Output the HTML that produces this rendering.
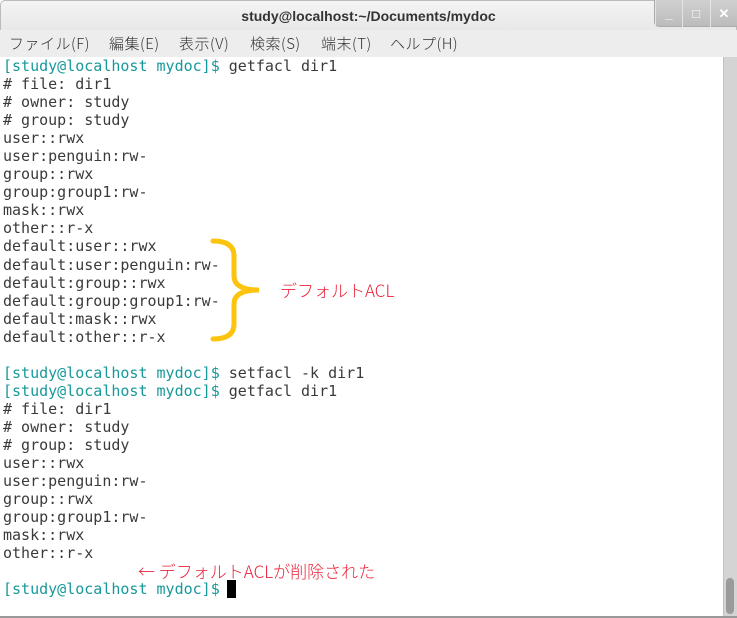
<!DOCTYPE html>
<html><head><meta charset="utf-8"><style>
*{margin:0;padding:0;box-sizing:border-box}
body{width:737px;height:618px;overflow:hidden;background:#fff;position:relative;font-family:"Liberation Sans","Noto Sans CJK JP",sans-serif}
#title{position:absolute;left:0;top:0;width:737px;height:30px;background:linear-gradient(#f4f4f4,#e8e8e8);border:1px solid #bbb;border-bottom:none;border-radius:5px 5px 0 0}
#title .t{position:absolute;left:0;right:0;top:7px;text-align:center;font-size:14px;font-weight:bold;color:#333}
#btns{position:absolute;left:654px;top:0;width:83px;height:27px;background:linear-gradient(#d0d0d0,#bcbcbc);border-left:1px solid #aaa;border-bottom:1px solid #aaa;border-radius:0 0 0 5px}
#btns div{position:absolute;top:0;width:27px;height:27px;border-left:1px solid #e4e4e4;color:#fff;font-size:13px;font-weight:bold;text-align:center;line-height:27px}
#menu{position:absolute;left:0;top:30px;width:737px;height:27px;background:#ededed;font-size:15px;color:#333;font-family:"Noto Sans CJK JP",sans-serif;font-weight:300}
#menu span{position:absolute;top:3px;white-space:nowrap;letter-spacing:0.5px}
#term{position:absolute;left:0;top:57px;width:723px;height:561px;background:#fff}
pre{position:absolute;left:3px;top:0;font-family:"DejaVu Sans Mono","Liberation Mono",monospace;font-size:15px;line-height:18.04px;color:#3a3a3a}
.p{color:#17999a}
#sb{position:absolute;left:723px;top:57px;width:14px;height:559px;background:#d4d4d4;border-left:1px solid #c0c0c0}
#thumb{position:absolute;left:726px;top:578px;width:8px;height:36px;background:#9a9a9a;border-radius:4px}
#bot{position:absolute;left:0;top:616px;width:737px;height:2px;background:#999}
.r{position:absolute;color:#e8233a;font-size:17px;white-space:nowrap;font-family:"Noto Sans CJK JP",sans-serif;font-weight:300}
#cur{position:absolute;left:227px;top:580px;width:9px;height:18px;background:#000}
</style></head><body>
<div id="title"><div class="t">study@localhost:~/Documents/mydoc</div></div>
<div id="btns"><div style="left:0">_</div><div style="left:27px">□</div><div style="left:55px">✕</div></div>
<div id="menu"><span style="left:9px">ファイル(F)</span><span style="left:109px">編集(E)</span><span style="left:179px">表示(V)</span><span style="left:250px">検索(S)</span><span style="left:321px">端末(T)</span><span style="left:390px">ヘルプ(H)</span></div>
<div id="term"><pre><span class="p">[study@localhost mydoc]$</span> getfacl dir1
# file: dir1
# owner: study
# group: study
user::rwx
user:penguin:rw-
group::rwx
group:group1:rw-
mask::rwx
other::r-x
default:user::rwx
default:user:penguin:rw-
default:group::rwx
default:group:group1:rw-
default:mask::rwx
default:other::r-x

<span class="p">[study@localhost mydoc]$</span> setfacl -k dir1
<span class="p">[study@localhost mydoc]$</span> getfacl dir1
# file: dir1
# owner: study
# group: study
user::rwx
user:penguin:rw-
group::rwx
group:group1:rw-
mask::rwx
other::r-x

<span class="p">[study@localhost mydoc]$</span> </pre></div>
<div id="cur"></div>
<svg style="position:absolute;left:210px;top:238px" width="50" height="104" viewBox="0 0 50 104"><path d="M3 3 Q24 3 24 18 L24 38 Q24 52 49 52 Q24 52 24 66 L24 86 Q24 101 3 101" fill="none" stroke="#fcc30f" stroke-width="5" stroke-linecap="round"/></svg>
<div class="r" style="left:280px;top:277px">デフォルトACL</div>
<div class="r" style="left:138px;top:558px">←&nbsp;デフォルトACLが削除された</div>
<div id="sb"></div><div id="thumb"></div><div id="bot"></div>
</body></html>
